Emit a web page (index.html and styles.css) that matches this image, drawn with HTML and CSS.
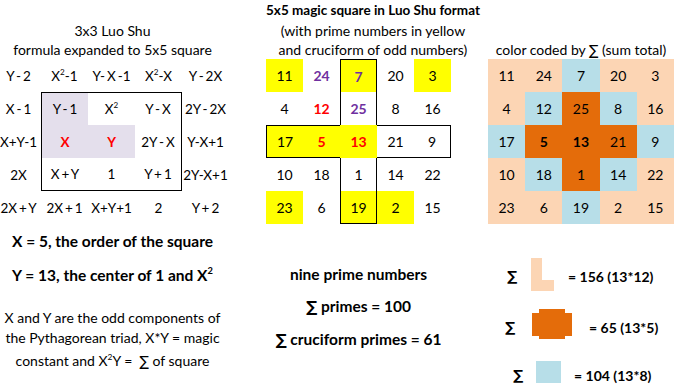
FILE: index.html
```html
<!DOCTYPE html>
<html lang="en">
<head>
<meta charset="utf-8">
<title>Luo Shu 5x5 magic square</title>
<link rel="stylesheet" href="styles.css">
</head>
<body>
<div class="sheet">
  <section class="col col-left">
    <div class="head">
      <div class="hl"></div>
      <div class="hl"><span>3x3 Luo Shu</span></div>
      <div class="hl"><span>formula expanded to 5x5 square</span></div>
    </div>
    <div class="grid grid-left">
      <div class="c"><span>Y - 2</span></div>
      <div class="c"><span>X<sup>2</sup>-1</span></div>
      <div class="c"><span>Y- X -1</span></div>
      <div class="c"><span>X<sup>2</sup>-X</span></div>
      <div class="c"><span>Y - 2X</span></div>

      <div class="c"><span>X - 1</span></div>
      <div class="c lav bt bl"><span>Y - 1</span></div>
      <div class="c bt"><span>X<sup>2</sup></span></div>
      <div class="c bt br"><span>Y - X</span></div>
      <div class="c"><span>2Y - 2X</span></div>

      <div class="c"><span>X+Y-1</span></div>
      <div class="c lav bl red"><span>X</span></div>
      <div class="c lav red"><span>Y</span></div>
      <div class="c br"><span>2Y - X</span></div>
      <div class="c"><span>Y-X+1</span></div>

      <div class="c"><span>2X</span></div>
      <div class="c bl bb"><span>X + Y</span></div>
      <div class="c bb"><span>1</span></div>
      <div class="c bb br"><span>Y + 1</span></div>
      <div class="c"><span>2Y-X+1</span></div>

      <div class="c"><span>2X + Y</span></div>
      <div class="c"><span>2X + 1</span></div>
      <div class="c"><span>X+Y+1</span></div>
      <div class="c"><span>2</span></div>
      <div class="c"><span>Y + 2</span></div>
    </div>
    <div class="notes-left">
      <div class="nrow nrow-a b"><span>X = 5, the order of the square</span></div>
      <div class="nrow nrow-b b"><span>Y = 13, the center of 1 and X<sup>2</sup></span></div>
      <div class="para">
        <div class="pl pl1"><span>X and Y are the odd components of</span></div>
        <div class="pl pl2"><span>the Pythagorean triad, X*Y = magic</span></div>
        <div class="pl pl3"><span>constant and X<sup>2</sup>Y = &nbsp;<span class="sig-thin">∑</span> of square</span></div>
      </div>
    </div>
  </section>

  <section class="col col-mid">
    <div class="head">
      <div class="hl title b"><span>5x5 magic square in Luo Shu format</span></div>
      <div class="hl"><span>(with prime numbers in yellow</span></div>
      <div class="hl"><span>and cruciform of odd numbers)</span></div>
    </div>
    <div class="grid grid-mid">
      <div class="c yel"><span>11</span></div>
      <div class="c pur"><span>24</span></div>
      <div class="c yel pur bt bl br"><span>7</span></div>
      <div class="c"><span>20</span></div>
      <div class="c yel"><span>3</span></div>

      <div class="c"><span>4</span></div>
      <div class="c red"><span>12</span></div>
      <div class="c pur bl br"><span>25</span></div>
      <div class="c"><span>8</span></div>
      <div class="c"><span>16</span></div>

      <div class="c yel bt bb bl"><span>17</span></div>
      <div class="c yel red bt bb"><span>5</span></div>
      <div class="c yel red"><span>13</span></div>
      <div class="c bt bb"><span>21</span></div>
      <div class="c bt bb br"><span>9</span></div>

      <div class="c"><span>10</span></div>
      <div class="c"><span>18</span></div>
      <div class="c bl br"><span>1</span></div>
      <div class="c"><span>14</span></div>
      <div class="c"><span>22</span></div>

      <div class="c yel"><span>23</span></div>
      <div class="c"><span>6</span></div>
      <div class="c yel bl br bb"><span>19</span></div>
      <div class="c yel"><span>2</span></div>
      <div class="c"><span>15</span></div>
    </div>
    <div class="notes-mid">
      <div class="nrow b"><span>nine prime numbers</span></div>
      <div class="nrow b"><span><span class="sig">∑</span> primes = 100</span></div>
      <div class="nrow b"><span><span class="sig">∑</span> cruciform primes = 61</span></div>
    </div>
  </section>

  <section class="col col-right">
    <div class="head">
      <div class="hl"></div>
      <div class="hl"></div>
      <div class="hl"><span>color coded by <span class="sig-thin">∑</span> (sum total)</span></div>
    </div>
    <div class="grid grid-right">
      <div class="c pe"><span>11</span></div>
      <div class="c pe"><span>24</span></div>
      <div class="c bu"><span>7</span></div>
      <div class="c pe"><span>20</span></div>
      <div class="c pe"><span>3</span></div>

      <div class="c pe"><span>4</span></div>
      <div class="c bu"><span>12</span></div>
      <div class="c org"><span>25</span></div>
      <div class="c bu"><span>8</span></div>
      <div class="c pe"><span>16</span></div>

      <div class="c bu"><span>17</span></div>
      <div class="c org b"><span>5</span></div>
      <div class="c org b"><span>13</span></div>
      <div class="c org"><span>21</span></div>
      <div class="c bu"><span>9</span></div>

      <div class="c pe"><span>10</span></div>
      <div class="c bu"><span>18</span></div>
      <div class="c org"><span>1</span></div>
      <div class="c bu"><span>14</span></div>
      <div class="c pe"><span>22</span></div>

      <div class="c pe"><span>23</span></div>
      <div class="c pe"><span>6</span></div>
      <div class="c bu"><span>19</span></div>
      <div class="c pe"><span>2</span></div>
      <div class="c pe"><span>15</span></div>
    </div>
    <div class="sums">
      <div class="srow srow-a">
        <span class="sig">∑</span>
        <svg class="shape" width="23" height="33" viewBox="0 0 23 33"><path d="M0 0H11V22H23V33H0Z" fill="#FCD5B4"/></svg>
        <span class="b">= 156 (13*12)</span>
      </div>
      <div class="srow srow-b">
        <span class="sig">∑</span>
        <svg class="shape" width="40" height="30" viewBox="0 0 40 30"><path d="M7 0H33V4H40V27H33V30H7V27H0V4H7Z" fill="#E46C0A"/></svg>
        <span class="b">= 65 (13*5)</span>
      </div>
      <div class="srow srow-c">
        <span class="sig">∑</span>
        <svg class="shape" width="25" height="22" viewBox="0 0 25 22"><rect width="25" height="22" fill="#B7DEE8"/></svg>
        <span class="b">= 104 (13*8)</span>
      </div>
    </div>
  </section>
</div>
</body>
</html>
```
FILE: styles.css
```css
html, body {
  margin: 0;
  padding: 0;
  background: #fff;
}
body {
  font-family: Lato, "DejaVu Sans", sans-serif;
  font-size: 14px;
  color: #000;
}
.sheet {
  display: flex;
  width: 677px;
  height: 392px;
  overflow: hidden;
}
.col {
  display: flex;
  flex-direction: column;
  flex: none;
}
.col-left { width: 233px; margin-left: -4px; }
.col-mid { width: 185px; margin-left: 37px; }
.col-right { width: 186px; margin-left: 37px; }

.head {
  height: 59px;
  display: grid;
  grid-template-rows: 20px 20px 19px;
}
.hl {
  display: flex;
  justify-content: center;
  align-items: center;
  white-space: nowrap;
}
.title { font-size: 13.5px; }

.grid {
  display: grid;
  grid-template-rows: repeat(5, 33px);
}
.grid-left {
  grid-template-columns: 45px repeat(4, 47px);
  font-size: 13.5px;
  word-spacing: -1.5px;
}
.grid-mid { grid-template-columns: repeat(5, 37px); }
.grid-right { grid-template-columns: repeat(5, 37.2px); }

.c {
  display: flex;
  align-items: center;
  justify-content: center;
  white-space: nowrap;
  box-sizing: border-box;
}
.bt { border-top: 1px solid #000; }
.bb { border-bottom: 1px solid #000; }
.bl { border-left: 1px solid #000; }
.br { border-right: 1px solid #000; }

.b { font-weight: 700; }
.lav { background: #E4DFEC; }
.yel { background: #FFFF00; }
.red { color: #FF0000; font-weight: 700; }
.pur { color: #7030A0; font-weight: 700; }
.pe { background: #FCD5B4; }
.bu { background: #B7DEE8; }
.org { background: #E46C0A; }

sup {
  font-size: 0.6em;
  line-height: 0;
  vertical-align: 0.75em;
}

.nrow {
  height: 33px;
  display: flex;
  align-items: center;
  justify-content: center;
  white-space: nowrap;
  font-size: 15.5px;
}
.nrow-b { padding-top: 3px; box-sizing: border-box; }
.para {
  padding-top: 17px;
}
.pl {
  display: flex;
  justify-content: center;
  align-items: center;
  white-space: nowrap;
  height: 20px;
}
.pl3 { height: 26px; }

.notes-mid {
  padding-top: 33px;
}

.sig { font-family: "DejaVu Sans", sans-serif; font-weight: 700; }
.sig-thin { font-family: "DejaVu Sans", sans-serif; font-weight: 400; }

.sums {
  padding-top: 34px;
  display: flex;
  flex-direction: column;
}
.srow {
  display: flex;
  align-items: center;
  white-space: nowrap;
}
.srow .shape { align-self: flex-start; }
.srow-a { height: 36px; padding-left: 19px; gap: 14px; }
.srow-b { height: 36px; margin-top: 15px; padding-left: 17px; gap: 17px; }
.srow-c { height: 28px; margin-top: 16px; padding-left: 25px; gap: 13px; }
.shape { display: block; flex: none; }
```
